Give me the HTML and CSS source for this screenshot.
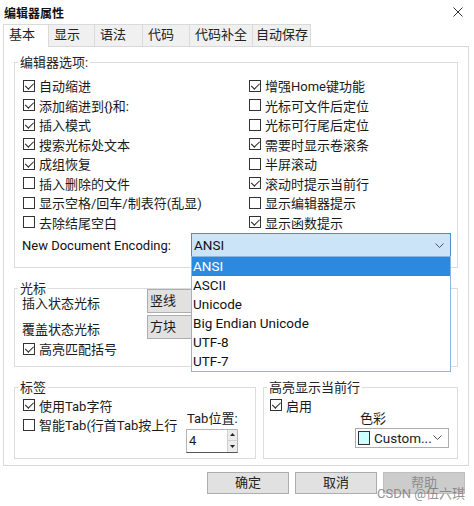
FILE: index.html
```html
<!DOCTYPE html>
<html lang="zh-CN">
<head>
<meta charset="utf-8">
<title>编辑器属性</title>
<link rel="stylesheet" href="styles.css">
</head>
<body>
<div class="dialog">
  <div class="titlebar">
    <span class="title">编辑器属性</span>
    <svg class="close" viewBox="0 0 10 10" width="10" height="10"><path d="M0.5 0.5L9.5 9.5M9.5 0.5L0.5 9.5" stroke="#333" stroke-width="1" fill="none"/></svg>
  </div>
  <div class="tabs">
    <div class="tab active">基本</div>
    <div class="tab">显示</div>
    <div class="tab">语法</div>
    <div class="tab">代码</div>
    <div class="tab">代码补全</div>
    <div class="tab tight">自动保存</div>
  </div>
  <div class="panel">
    <fieldset class="group editor">
      <legend>编辑器选项:</legend>
      <div class="opts">
        <label class="cb"><span class="box on"></span>自动缩进</label>
        <label class="cb"><span class="box on"></span>添加缩进到{}和:</label>
        <label class="cb"><span class="box on"></span>插入模式</label>
        <label class="cb"><span class="box on"></span>搜索光标处文本</label>
        <label class="cb"><span class="box on"></span>成组恢复</label>
        <label class="cb"><span class="box"></span>插入删除的文件</label>
        <label class="cb"><span class="box"></span>显示空格/回车/制表符(乱显)</label>
        <label class="cb"><span class="box"></span>去除结尾空白</label>
        <label class="cb"><span class="box on"></span>增强Home键功能</label>
        <label class="cb"><span class="box"></span>光标可文件后定位</label>
        <label class="cb"><span class="box"></span>光标可行尾后定位</label>
        <label class="cb"><span class="box on"></span>需要时显示卷滚条</label>
        <label class="cb"><span class="box"></span>半屏滚动</label>
        <label class="cb"><span class="box on"></span>滚动时提示当前行</label>
        <label class="cb"><span class="box"></span>显示编辑器提示</label>
        <label class="cb"><span class="box on"></span>显示函数提示</label>
      </div>
      <div class="enc">
        <span class="enc-label">New Document Encoding:</span>
        <div class="select">
          <span>ANSI</span>
          <svg class="chev" viewBox="0 0 9 5" width="9" height="5"><path d="M0.5 0.5L4.5 4.5L8.5 0.5" stroke="#555" stroke-width="1" fill="none"/></svg>
          <div class="dropdown">
            <div class="item sel">ANSI</div>
            <div class="item">ASCII</div>
            <div class="item">Unicode</div>
            <div class="item">Big Endian Unicode</div>
            <div class="item">UTF-8</div>
            <div class="item">UTF-7</div>
          </div>
        </div>
      </div>
    </fieldset>

    <fieldset class="group cursor">
      <legend>光标</legend>
      <div class="crow first"><span class="clabel">插入状态光标</span><div class="combo">竖线</div></div>
      <div class="crow"><span class="clabel">覆盖状态光标</span><div class="combo">方块</div></div>
      <label class="cb ind"><span class="box on"></span>高亮匹配括号</label>
    </fieldset>

    <div class="bottom">
      <fieldset class="group tabg">
        <legend>标签</legend>
        <div class="inner">
          <div class="col-left">
            <label class="cb"><span class="box on"></span>使用Tab字符</label>
            <label class="cb"><span class="box"></span>智能Tab(行首Tab按上行</label>
          </div>
          <div class="col-spin">
            <div class="flabel">Tab位置:</div>
            <div class="spin">
              <span class="spin-val">4</span>
              <span class="spin-btns">
                <span class="sb"><svg viewBox="0 0 5 3" width="5" height="3"><path d="M0 3L2.5 0L5 3Z" fill="#222"/></svg></span>
                <span class="sb"><svg viewBox="0 0 5 3" width="5" height="3"><path d="M0 0L2.5 3L5 0Z" fill="#222"/></svg></span>
              </span>
            </div>
          </div>
        </div>
      </fieldset>
      <fieldset class="group hlg">
        <legend>高亮显示当前行</legend>
        <div class="inner">
          <div class="col-left hl-left">
            <label class="cb"><span class="box on"></span>启用</label>
          </div>
          <div class="col-color">
            <div class="flabel clr">色彩</div>
            <div class="ccombo">
              <span class="swatch"></span>
              <span class="ctext">Custom...</span>
              <svg class="chev" viewBox="0 0 9 5" width="9" height="5"><path d="M0.5 0.5L4.5 4.5L8.5 0.5" stroke="#555" stroke-width="1" fill="none"/></svg>
            </div>
          </div>
        </div>
      </fieldset>
    </div>
  </div>
  <div class="buttons">
    <div class="btn">确定</div>
    <div class="btn">取消</div>
    <div class="btn disabled">帮助</div>
  </div>
  <div class="watermark">CSDN @伍六琪</div>
</div>
</body>
</html>
```

FILE: styles.css
```css
* { box-sizing: border-box; }
html, body { margin: 0; padding: 0; }
body {
  width: 474px;
  height: 506px;
  overflow: hidden;
  background: #fff;
  font-family: Roboto, "Noto Sans CJK SC", sans-serif;
  font-size: 13px;
  color: #1a1a1a;
}
.dialog { position: relative; width: 474px; height: 506px; }

.titlebar {
  height: 24px;
  display: flex;
  align-items: center;
  justify-content: space-between;
  padding: 0 11px 0 4px;
}
.title { font-family: "Noto Sans CJK SC", sans-serif; font-weight: bold; font-size: 12px; color: #111; }
.close { display: block; }

.tabs { display: flex; height: 22px; padding-left: 3px; }
.tab {
  height: 22px;
  min-width: 46px;
  padding: 0 5px;
  border: 1px solid #dadada;
  border-bottom: none;
  border-left: none;
  background: #f0f0f0;
  line-height: 20px;
  font-size: 13px;
  color: #222;
  white-space: nowrap;
}
.tab:first-child { border-left: 1px solid #dadada; }
.tab:nth-child(3) { min-width: 48px; }
.tab:nth-child(4) { min-width: 47px; }
.tab.tight { padding: 0 2px 0 3px; }
.tab.active { background: #fff; height: 23px; position: relative; z-index: 1; }

.panel {
  position: relative;
  margin: 0 5px 0 3px;
  border: 1px solid #d9d9d9;
  padding: 8px 10px 6px 10px;
}

.group {
  margin: 0;
  border: 1px solid #dcdcdc;
  padding: 0;
  min-width: 0;
}
.group legend {
  margin-left: 3px;
  padding: 0 2px;
  font-size: 13px;
  line-height: 15px;
  color: #222;
}

.editor { padding: 6px 0 10px 0; }
.opts {
  display: grid;
  grid-template-columns: 226px 1fr;
  grid-template-rows: repeat(8, 19.5px);
  grid-auto-flow: column;
  margin-left: 8px;
}
.cb {
  display: flex;
  align-items: center;
  gap: 4px;
  height: 19.5px;
  white-space: nowrap;
}
.box {
  position: relative;
  flex: none;
  width: 12px;
  height: 12px;
  border: 1px solid #333;
  background: #fff;
}
.box.on::after {
  content: "";
  position: absolute;
  left: 3px;
  top: 0px;
  width: 3.5px;
  height: 7px;
  border: solid #222;
  border-width: 0 1.3px 1.3px 0;
  transform: rotate(45deg);
}

.enc { display: flex; align-items: center; margin: 1px 6px 0 7px; }
.enc-label { width: 169px; font-size: 13px; color: #111; }
.select {
  position: relative;
  width: 260px;
  height: 24px;
  display: flex;
  align-items: center;
  justify-content: space-between;
  padding: 0 6px 0 2px;
  border: 1px solid #4a8fcf;
  background: #cce4f7;
  font-size: 13.5px;
  color: #111;
}
.chev { display: block; }
.dropdown {
  position: absolute;
  top: 100%;
  left: -1px;
  width: 260px;
  z-index: 5;
  background: #fff;
  border: 1px solid #8ab6e2;
}
.item { height: 19px; line-height: 19px; padding-left: 1px; font-size: 13.5px; color: #111; white-space: nowrap; }
.item.sel { background: #2b8ae0; color: #fff; }

.cursor { margin-top: 13px; padding: 0 0 7px 0; }
.crow { display: flex; align-items: flex-start; height: 24px; margin: 2px 0 0 7px; }
.crow.first { margin-top: -7px; }
.clabel { width: 125px; padding-top: 8px; line-height: 14px; }
.combo {
  width: 120px;
  height: 24px;
  background: #e1e1e1;
  border: 1px solid #adadad;
  padding-left: 2px;
  line-height: 21px;
}
.cb.ind { margin-left: 8px; }

.bottom { display: flex; gap: 7px; margin-top: 13px; }
.tabg { width: 242px; padding: 1px 0 5px 0; }
.hlg { width: 195px; padding: 1px 0 5px 0; }
.inner { display: flex; }
.col-left { flex: 1; margin-left: 8px; }
.hl-left { margin-left: 6px; }
.col-spin { width: 52px; margin: 15px 17px 0 0; }
.flabel { height: 16px; line-height: 16px; padding-left: 1px; white-space: nowrap; }
.spin {
  display: flex;
  height: 24px;
  margin-top: 2px;
  border: 1px solid #b5b5b5;
  border-bottom-color: #555;
  background: #fff;
}
.spin-val { flex: 1; padding-left: 2px; line-height: 21px; }
.spin-btns { width: 10px; display: flex; flex-direction: column; border-left: 1px solid #d0d0d0; }
.sb { flex: 1; display: flex; align-items: center; justify-content: center; background: #ececec; }
.sb + .sb { border-top: 1px solid #d0d0d0; }
.sb svg { display: block; }

.col-color { width: 94px; margin: 15px 8px 0 auto; }
.flabel.clr { padding-left: 5px; }
.ccombo {
  display: flex;
  align-items: center;
  height: 20px;
  margin-top: 1px;
  border: 1px solid #adadad;
  background: #fff;
  padding: 0 6px 0 2px;
}
.swatch { flex: none; width: 12px; height: 14px; background: #ccffff; border: 1px solid #333; }
.ctext { flex: 1; padding-left: 4px; font-size: 13.5px; }

.buttons { display: flex; justify-content: flex-end; gap: 6px; padding: 6px 9px 0 0; }
.btn {
  width: 82px;
  height: 22px;
  background: #e1e1e1;
  border: 1px solid #adadad;
  text-align: center;
  line-height: 20px;
  color: #222;
}
.btn.disabled { background: #cccccc; border-color: #bfbfbf; color: #8c8c8c; }

.watermark {
  position: absolute;
  right: 9px;
  bottom: 5px;
  font-size: 13px;
  line-height: 14px;
  color: rgba(120, 120, 120, 0.8);
  white-space: nowrap;
}
```
